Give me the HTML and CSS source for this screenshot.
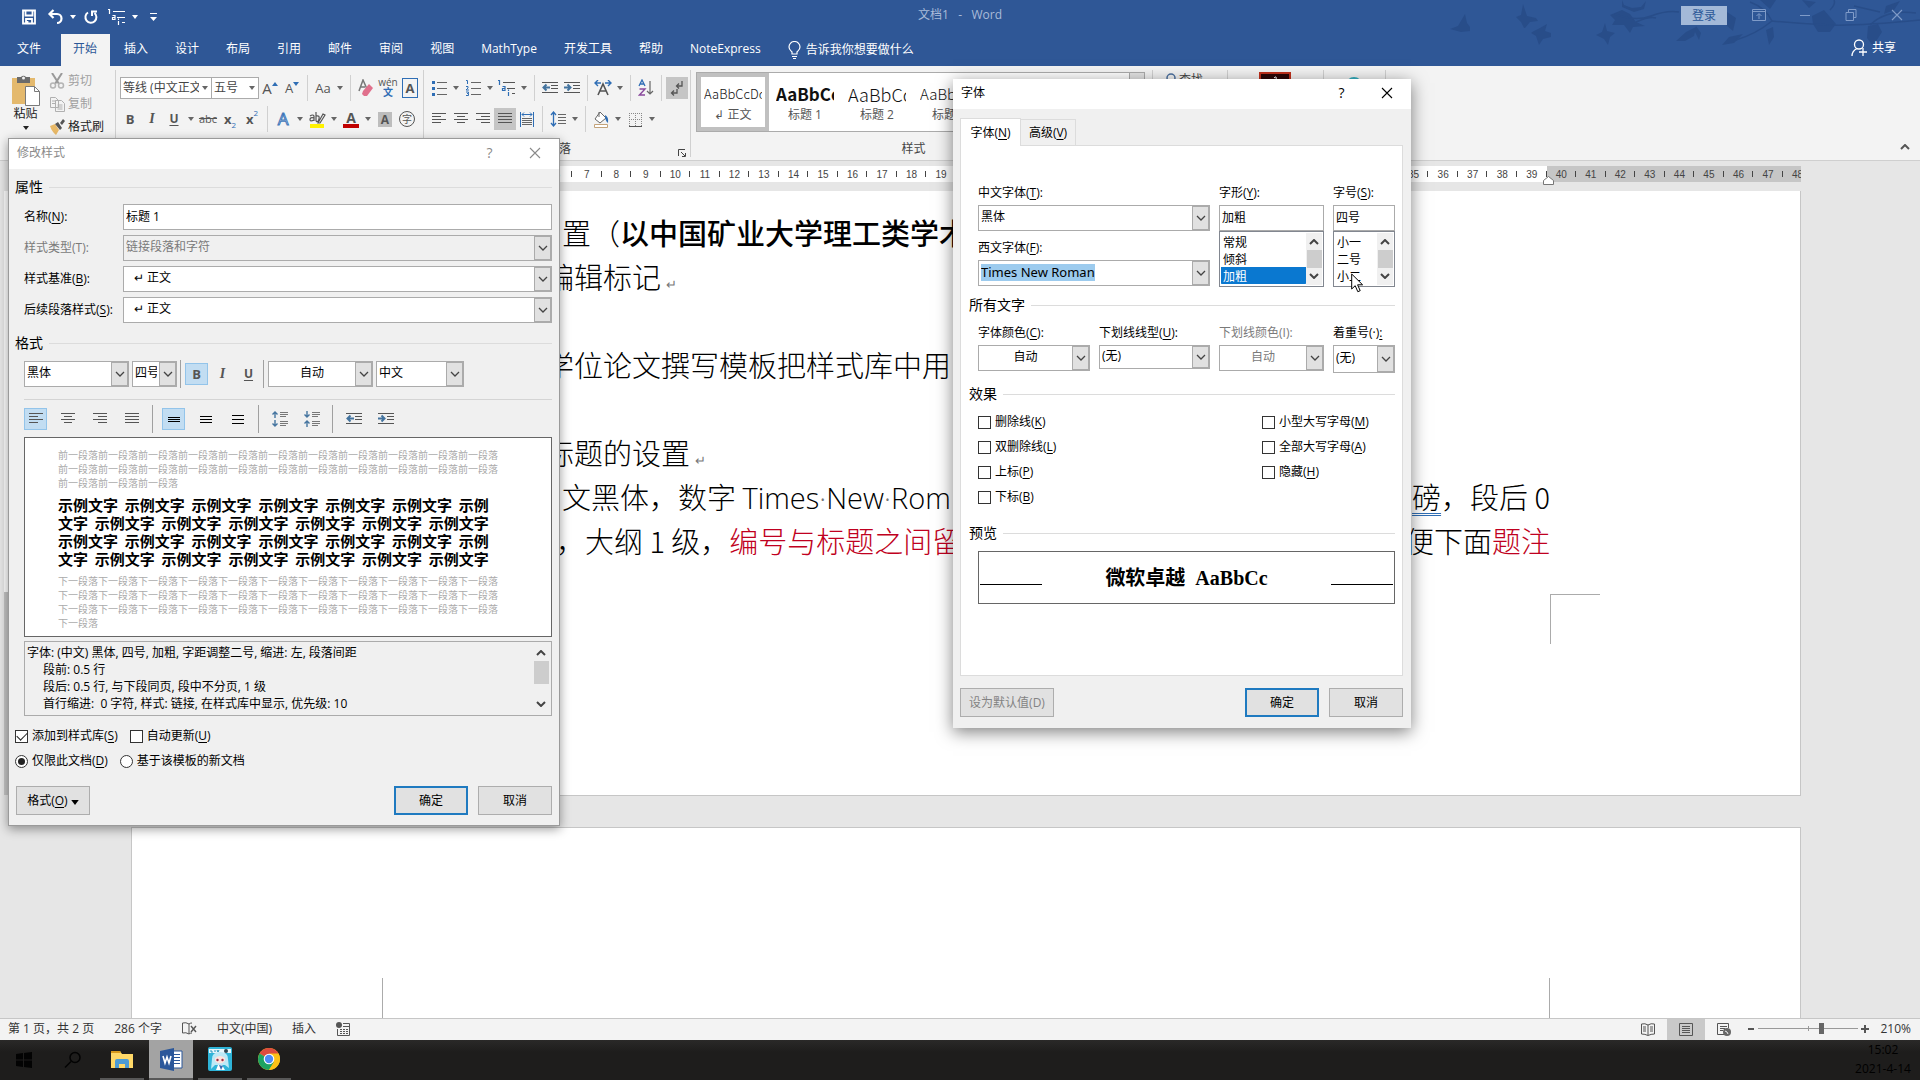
FILE: index.html
```html
<!DOCTYPE html>
<html lang="zh-CN">
<head>
  <meta charset="UTF-8" />
  <meta name="viewport" content="width=device-width, initial-scale=1" />
  <title>文档1 - Word</title>
  <link rel="stylesheet" href="styles.css">
</head>
<body>

  <!-- shared icon shapes -->
  <svg class="defs" aria-hidden="true">
    <symbol id="caret" viewBox="0 0 6 4"><path d="M0 0h6L3 4z" fill="currentColor"/></symbol>
    <symbol id="chev" viewBox="0 0 10 6"><path d="M1 1l4 4 4-4" fill="none" stroke="currentColor" stroke-width="1.3"/></symbol>
    <symbol id="chev-up" viewBox="0 0 10 6"><path d="M1 5l4-4 4 4" fill="none" stroke="currentColor" stroke-width="2"/></symbol>
    <symbol id="chev-down" viewBox="0 0 10 6"><path d="M1 1l4 4 4-4" fill="none" stroke="currentColor" stroke-width="2"/></symbol>
    <symbol id="close" viewBox="0 0 12 12"><path d="M1 1l10 10M11 1L1 11" fill="none" stroke="currentColor" stroke-width="1.1"/></symbol>
    <symbol id="al-left" viewBox="0 0 16 16"><path d="M1 2.5h14M1 5.5h9M1 8.5h14M1 11.5h9" stroke="currentColor" fill="none"/></symbol>
    <symbol id="al-center" viewBox="0 0 16 16"><path d="M1 2.5h14M4 5.5h8M1 8.5h14M4 11.5h8" stroke="currentColor" fill="none"/></symbol>
    <symbol id="al-right" viewBox="0 0 16 16"><path d="M1 2.5h14M6 5.5h9M1 8.5h14M6 11.5h9" stroke="currentColor" fill="none"/></symbol>
    <symbol id="al-just" viewBox="0 0 16 16"><path d="M1 2.5h14M1 5.5h14M1 8.5h14M1 11.5h14" stroke="currentColor" fill="none"/></symbol>
    <symbol id="multi" viewBox="0 0 18 16">
      <path d="M5 2.5h12M9 8.5h8M14 13.5h3" stroke="currentColor" fill="none"/>
      <path d="M0 .5h1.500V5M4.500 6.500h2.500v4H4.500v-2H7M10.500 9.500v1.500M10.500 12v4" class="accent" stroke-width="1.200" fill="none"/>
    </symbol>
    <symbol id="outdent" viewBox="0 0 16 16">
      <path d="M0 2.500h16M9 5.500h7M9 8.500h7M0 12.500h16" stroke="currentColor" fill="none"/>
      <path d="M8 7.500H2M4.500 4.500l-3 3 3 3" stroke="#44749f" stroke-width="2" fill="none"/>
    </symbol>
    <symbol id="indent" viewBox="0 0 16 16">
      <path d="M0 2.500h16M9 5.500h7M9 8.500h7M0 12.500h16" stroke="currentColor" fill="none"/>
      <path d="M0 7.500h6M3.500 4.500l3 3-3 3" stroke="#44749f" stroke-width="2" fill="none"/>
    </symbol>
    <symbol id="launcher" viewBox="0 0 8 8"><path d="M.5 7V.5H7M3 3l4 4M7.500 4v3.500H4" stroke="currentColor" fill="none"/></symbol>
  </svg>

  <div class="word">
    <header class="top">
      <svg class="birds" viewBox="0 0 470 66" aria-hidden="true">
        <g fill="#284d89">
          <path d="M15 14l2 9 3 4 0 4-9 1-11-3 8-3z"/>
          <path d="M73 4l4 12 9 2 2 3-8 1-5 6-1 0-3-6-5-5 5-2z"/>
          <path d="M97 24l-7 4-6 3-3 2 5 3 3 9 4-6 8-2 0-4-6-2z"/>
          <path d="M155 23l2 8 8 2-5 4-2 8-4-6-8-4 6-3z"/>
          <path d="M160 15l12-5 8 4 6 8 9 4-12 1-3 6-6-8-12 0 3-5z"/>
          <path d="M172 0l2 5 8 3 9-1 5-6-2 8-10 3-12-5z"/>
          <path d="M226 41l10-9 10-5-2 9-9 5zM249 40l-4-8 1-6 5 7zM272 45l7-8 14-3-9 9zM277 12l9 6-3 13-7-6zM316 30l3 15 5-8-1-10z"/>
          <path d="M362 16l12-6 12 14-6 8-12 0-5-8zM418 26l10-2 4 8-9 14-6-8zM436 6l14-5-6 9-10 4zM310 0l10 9 6-9zM352 0l7 8 7-6z"/>
        </g>
        <g fill="none" stroke="#284d89" stroke-width="1.500">
          <path d="M165 14q20 8 36 2t28-4M186 22q14-6 20-4"/>
          <path d="M286 40q20-6 36-19 30 3 58 4t90-5"/>
          <path d="M300 2q16 6 22 19M420 25q16-16 46-12M380 10q6-6 4-10M404 6l26 6"/>
        </g>
      </svg>
      <div class="titlebar">
        <div class="quick">
          <button class="qbtn" aria-label="保存"><svg width="16" height="16" viewBox="0 0 16 16"><path d="M2 1.500h12v13H2zM4.500 1.500v5h7v-5M5 14.500V10h6v4.500M6.500 12v2" fill="none" stroke="currentColor" stroke-width="1.800"/></svg></button>
          <button class="qbtn" aria-label="撤消"><svg width="16" height="16" viewBox="0 0 16 16"><path d="M2 5h8a4.500 4.500 0 0 1 0 9M6.500 1L2.500 5l4 4" fill="none" stroke="currentColor" stroke-width="2.200"/></svg></button>
          <svg class="caret" width="6" height="4"><use href="#caret"/></svg>
          <button class="qbtn" aria-label="重复"><svg width="16" height="16" viewBox="0 0 16 16"><path d="M5 3.500a5.500 5.500 0 1 0 6.500.5M9 7V2.500h5" fill="none" stroke="currentColor" stroke-width="2"/></svg></button>
          <button class="qbtn" aria-label="多级列表"><svg width="18" height="16"><use href="#multi"/></svg></button>
          <svg class="caret" width="6" height="4"><use href="#caret"/></svg>
          <button class="qbtn" aria-label="自定义快速访问工具栏"><svg width="7" height="8" viewBox="0 0 7 8"><path d="M0 .5h7" stroke="currentColor"/><path d="M0 4h7L3.500 8z" fill="currentColor"/></svg></button>
        </div>
        <div class="title">文档1 &nbsp;&nbsp;-&nbsp;&nbsp; Word</div>
        <div class="window-buttons">
          <button class="login">登录</button>
          <button aria-label="功能区显示选项"><svg width="14" height="12" viewBox="0 0 14 12"><path d="M.5.5h13v11H.5zM.5 2.500h13M7 10V5M4.500 7L7 4.500 9.500 7" fill="none" stroke="currentColor"/></svg></button>
          <button aria-label="最小化"><svg width="12" height="12" viewBox="0 0 12 12"><path d="M1 6.500h10" stroke="currentColor"/></svg></button>
          <button aria-label="还原"><svg width="12" height="12" viewBox="0 0 12 12"><path d="M1 3.500h7.500v8H1zM3.500 3V.5H11v8H9" fill="none" stroke="currentColor"/></svg></button>
          <button aria-label="关闭"><svg width="12" height="12"><use href="#close"/></svg></button>
        </div>
      </div>
      <nav class="tabs">
        <a class="file" href="#">文件</a>
        <a class="active" href="#">开始</a>
        <a href="#">插入</a>
        <a href="#">设计</a>
        <a href="#">布局</a>
        <a href="#">引用</a>
        <a href="#">邮件</a>
        <a href="#">审阅</a>
        <a href="#">视图</a>
        <a href="#">MathType</a>
        <a href="#">开发工具</a>
        <a href="#">帮助</a>
        <a href="#">NoteExpress</a>
        <a class="tell" href="#"><svg width="13" height="18" viewBox="0 0 13 18"><path d="M4 13v-2C2.500 9.500 1 8.500 1 6a5.500 5.500 0 0 1 11 0c0 2.500-1.500 3.500-3 5v2zM4 15.500h5M5 17.500h3" fill="none" stroke="currentColor" stroke-width="1.200"/></svg>告诉我你想要做什么</a>
        <a class="share" href="#"><svg width="16" height="18" viewBox="0 0 16 18"><circle cx="8" cy="5.500" r="4.500" fill="none" stroke="currentColor" stroke-width="1.300"/><path d="M1 17q0-5 5-7.500M12 9v8M8 13h8" fill="none" stroke="currentColor" stroke-width="1.300"/></svg>共享</a>
      </nav>
    </header>

    <div class="ribbon">
      <section class="group clipboard">
        <div class="clip-body">
          <button class="paste">
            <svg width="30" height="32" viewBox="0 0 30 32"><path d="M1 4h23v26H1z" fill="#e4b96d"/><path d="M6 3h4a3 3 0 0 1 5 0h4v6H6z" fill="#6b6b6b"/><circle cx="12.500" cy="4" r="1.500" fill="#f3f3f3"/><path d="M14.500 12.500h9l5 5v14h-14z" fill="#fff" stroke="#7a7a7a"/><path d="M23.500 12.500v5h5" fill="none" stroke="#7a7a7a"/></svg>
            粘贴
            <svg width="6" height="4"><use href="#caret"/></svg>
          </button>
          <div class="clip-list">
            <button class="dim"><svg width="16" height="16" viewBox="0 0 16 16"><path d="M3 0l7 11M13 0L6 11" stroke="#9a9a9a" stroke-width="2" fill="none"/><circle cx="4" cy="12.500" r="2.500" fill="none" stroke="#b5b5b5" stroke-width="1.500"/><circle cx="12" cy="12.500" r="2.500" fill="none" stroke="#b5b5b5" stroke-width="1.500"/></svg>剪切</button>
            <button class="dim"><svg width="16" height="16" viewBox="0 0 16 16"><path d="M1.500 1.500h5l3 3v7h-8zM3 5h4M3 7.500h4M6.500 4.500h6l3 3v8h-9zM8.500 9h5M8.500 11h5M8.500 13h5" fill="#f3f3f3" stroke="#b0b0b0"/></svg>复制</button>
            <button><svg width="16" height="16" viewBox="0 0 16 16"><path d="M1 7l5-2 4 6-3 5q-4-3-6-9z" fill="#e8b968"/><path d="M6 5l3-2 4 6-2 2zM11 4l3-4 2 2-3 4z" fill="#555"/></svg>格式刷</button>
          </div>
        </div>
      </section>

      <section class="group font-group">
        <div class="row">
          <label class="rcombo face"><select aria-label="字体"><option>等线 (中文正文)</option></select><svg class="caret" width="6" height="4"><use href="#caret"/></svg></label>
          <label class="rcombo size"><select aria-label="字号"><option>五号</option></select><svg class="caret" width="6" height="4"><use href="#caret"/></svg></label>
          <button class="tool" aria-label="增大字号"><span class="glyph">A</span><svg width="6" height="12" viewBox="0 0 6 12"><path d="M0 4l3-4 3 4z" fill="#2f6eb5"/></svg></button>
          <button class="tool" aria-label="减小字号"><span class="glyph small">A</span><svg width="6" height="12" viewBox="0 0 6 12"><path d="M0 0h6L3 4z" fill="#2f6eb5"/></svg></button>
          <i class="sep"></i>
          <button class="tool" aria-label="更改大小写"><span class="glyph small">Aa</span></button><svg class="caret" width="6" height="4"><use href="#caret"/></svg>
          <i class="sep"></i>
          <button class="tool" aria-label="清除格式"><svg width="16" height="18" viewBox="0 0 16 18"><path d="M1 12L5 1l4 9M2 8h5" stroke="#777" stroke-width="1.500" fill="none"/><path d="M5 12l6-7 4 4-6 8H6l-2-2z" fill="#e0708c"/></svg></button>
          <button class="tool pinyin" aria-label="拼音指南"><span>wén</span><b>文</b></button>
          <button class="tool" aria-label="字符边框"><span class="boxed">A</span></button>
        </div>
        <div class="row">
          <button class="tool"><b>B</b></button>
          <button class="tool"><em>I</em></button>
          <button class="tool"><u class="bold">U</u></button><svg class="caret" width="6" height="4"><use href="#caret"/></svg>
          <button class="tool"><s>abc</s></button>
          <button class="tool"><b>x</b><sub>2</sub></button>
          <button class="tool"><b>x</b><sup>2</sup></button>
          <i class="sep"></i>
          <button class="tool"><span class="outlined">A</span></button><svg class="caret" width="6" height="4"><use href="#caret"/></svg>
          <button class="tool" aria-label="突出显示"><svg width="17" height="17" viewBox="0 0 17 17"><path d="M1 13h14v4H1z" fill="#fff200"/><path d="M1 5q3-2 4 0v5M5 7Q1 6 1 8.500T5 9M7 1v9M7 5q4-1 3 3t-3 2M9 12l5-9 2 1-5 8z" fill="none" stroke="#555" stroke-width="1.200"/></svg></button><svg class="caret" width="6" height="4"><use href="#caret"/></svg>
          <button class="tool"><span class="font-color">A</span></button><svg class="caret" width="6" height="4"><use href="#caret"/></svg>
          <button class="tool"><span class="shaded">A</span></button>
          <button class="tool"><span class="circled">字</span></button>
        </div>
      </section>

      <section class="group para-group">
        <div class="row">
          <button class="tool" aria-label="项目符号"><svg width="16" height="16" viewBox="0 0 16 16"><path d="M6 2.500h10M6 8.500h10M6 14.500h10" stroke="#666"/><path d="M1 1h3v3H1zM1 7h3v3H1zM1 13h3v3H1z" fill="#2f6eb5"/></svg></button><svg class="caret" width="6" height="4"><use href="#caret"/></svg>
          <button class="tool" aria-label="编号"><svg width="16" height="16" viewBox="0 0 16 16"><path d="M6 2.500h10M6 8.500h10M6 14.500h10" stroke="#666"/><path d="M1 .5h1.500V4M1 6.500h2v1.500L1 10h3M1 12h2.500v1.500H2M3.500 13.500v2H1" stroke="#2f6eb5" fill="none"/></svg></button><svg class="caret" width="6" height="4"><use href="#caret"/></svg>
          <button class="tool" aria-label="多级列表"><svg width="18" height="16"><use href="#multi"/></svg></button><svg class="caret" width="6" height="4"><use href="#caret"/></svg>
          <i class="sep"></i>
          <button class="tool" aria-label="减少缩进量"><svg width="16" height="16"><use href="#outdent"/></svg></button>
          <button class="tool" aria-label="增加缩进量"><svg width="16" height="16"><use href="#indent"/></svg></button>
          <i class="sep"></i>
          <button class="tool" aria-label="中文版式"><svg width="18" height="16" viewBox="0 0 18 16"><path d="M4 15L9 4l5 11M6 11h6" stroke="#555" stroke-width="1.600" fill="none"/><path d="M7 3H1M4 0L1 3l3 3M11 3h6M14 0l3 3-3 3" stroke="#2f6eb5" stroke-width="1.400" fill="none"/></svg></button><svg class="caret" width="6" height="4"><use href="#caret"/></svg>
          <i class="sep"></i>
          <button class="tool" aria-label="排序"><svg width="16" height="18" viewBox="0 0 16 18"><path d="M1 7l3-6 3 6M2 5h4" stroke="#2f6eb5" stroke-width="1.300" fill="none"/><path d="M1.500 10H7l-5.500 6H7" stroke="#8a4a9d" stroke-width="1.400" fill="none"/><path d="M12 2v13M9 12l3 3 3-3" stroke="#666" stroke-width="1.200" fill="none"/></svg></button>
          <i class="sep"></i>
          <button class="tool on" aria-label="显示编辑标记"><svg width="16" height="16" viewBox="0 0 16 16"><path d="M13 1v5H8M10 3.500L7.500 6 10 8.500M8 9v4H3M5 10.500L2.500 13 5 15.500" stroke="#555" stroke-width="1.300" fill="none"/></svg></button>
        </div>
        <div class="row">
          <button class="tool" aria-label="左对齐"><svg width="16" height="16"><use href="#al-left"/></svg></button>
          <button class="tool" aria-label="居中"><svg width="16" height="16"><use href="#al-center"/></svg></button>
          <button class="tool" aria-label="右对齐"><svg width="16" height="16"><use href="#al-right"/></svg></button>
          <button class="tool on" aria-label="两端对齐"><svg width="16" height="16"><use href="#al-just"/></svg></button>
          <button class="tool" aria-label="分散对齐"><svg width="16" height="16" viewBox="0 0 16 16"><path d="M3 7.500h10M3 9.500h10M3 11.500h10M3 13.500h10" stroke="#666"/><path d="M1.500 1v15M14.500 1v15M3 3.500h10M5 1.500l-2 2 2 2M11 1.500l2 2-2 2" stroke="#2f6eb5" fill="none"/></svg></button>
          <i class="sep"></i>
          <button class="tool" aria-label="行距"><svg width="16" height="16" viewBox="0 0 16 16"><path d="M8 3.500h8M8 6.500h8M8 9.500h8M8 12.500h8" stroke="#666"/><path d="M3.500 1v14M1 4l2.500-3L6 4M1 12l2.500 3L6 12" stroke="#2f6eb5" stroke-width="1.300" fill="none"/></svg></button><svg class="caret" width="6" height="4"><use href="#caret"/></svg>
          <i class="sep"></i>
          <button class="tool" aria-label="底纹"><svg width="17" height="17" viewBox="0 0 17 17"><path d="M7 1L2 8l5 4 6-5zM6 1v5" stroke="#666" fill="#fff"/><path d="M12 4q4 2 3 8-3-2-3-8z" fill="#2f6eb5"/><path d="M1.500 13.500h13v3h-13z" fill="#fff" stroke="#c3a37a"/></svg></button><svg class="caret" width="6" height="4"><use href="#caret"/></svg>
          <button class="tool" aria-label="边框"><svg width="15" height="15" viewBox="0 0 15 15"><path d="M1 1.500h13M1 7.500h13M1.500 1v13M7.500 1v13M13.500 1v13" stroke="#888" stroke-dasharray="1 1"/><path d="M1 14.500h13" stroke="#555"/></svg></button><svg class="caret" width="6" height="4"><use href="#caret"/></svg>
        </div>
        <div class="group-name">段落</div>
        <svg class="launcher" width="8" height="8"><use href="#launcher"/></svg>
      </section>

      <section class="group style-group">
        <div class="gallery">
          <button class="style-item current"><span class="s-normal">AaBbCcDd</span><span>↲ 正文</span></button>
          <button class="style-item"><span class="s-h1">AaBbCc</span><span>标题 1</span></button>
          <button class="style-item"><span class="s-h2">AaBbCc</span><span>标题 2</span></button>
          <button class="style-item"><span class="s-h3">AaBbCcD</span><span>标题 3</span></button>
          <div class="gallery-more"></div>
        </div>
        <div class="group-name">样式</div>
      </section>

      <section class="group edit-group">
        <button class="find"><svg width="12" height="14" viewBox="0 0 12 14"><circle cx="7" cy="5" r="4" fill="none" stroke="#4a6f9f" stroke-width="1.500"/><path d="M4 8l-4 5" stroke="#4a6f9f" stroke-width="2"/></svg>查找</button>
      </section>
      <section class="group addin-a"><svg width="32" height="32" viewBox="0 0 32 32"><path d="M1 1h30v30H1z" fill="#2a0505" stroke="#c0301c" stroke-width="2"/><path d="M15 6q3-3 2 2" stroke="#fff" fill="none"/></svg></section>
      <section class="group addin-b"><svg width="16" height="16" viewBox="0 0 16 16"><circle cx="8" cy="8" r="8" fill="#35b0c0"/></svg></section>
      <button class="collapse" aria-label="折叠功能区"><svg width="10" height="6"><use href="#chev-up"/></svg></button>
    </div>

    <main class="workspace">
      <div class="ruler"><div class="ruler-cells" id="rulerCells"></div><svg class="indent-mark" width="11" height="9" viewBox="0 0 11 9"><path d="M.5 8.500v-4l5-4 5 4v4z" fill="#fff" stroke="#777"/></svg></div>
      <div class="vruler"></div>
      <article class="page first">
        <p class="from-edge"><span>置（<b>以中国矿业大学理工类学术</b></span></p>
        <p><span>编辑标记<i class="mark">↵</i></span></p>
        <p></p>
        <p><span>学位论文撰写模板把样式库中用</span></p>
        <p></p>
        <p><span>标题的设置<i class="mark">↵</i></span></p>
        <p class="from-edge"><span>文黑体，数字 <span class="latin">Times<i class="dot">·</i>New<i class="dot">·</i>Rom</span></span><span><span class="grammar">磅</span>，段后 0</span></p>
        <p class="from-comma"><span>，大纲 1 级，<span class="red">编号与标题之间留</span></span><span>便下面<span class="red">题注</span></span></p>
        <div class="corner"></div>
      </article>
      <article class="page second"></article>
    </main>

    <footer class="status">
      <span>第 1 页，共 2 页</span>
      <span>286 个字</span>
      <svg width="15" height="13" viewBox="0 0 15 13"><path d="M7 2Q4 0 .5 1v10Q4 10 7 12zM7 2q1-1 3-1M7 12q1-1 3-1" fill="none" stroke="#555"/><path d="M9 4l5 6M14 4l-5 6" stroke="#555" stroke-width="1.400"/></svg>
      <span>中文(中国)</span>
      <span>插入</span>
      <svg width="14" height="14" viewBox="0 0 14 14"><circle cx="3" cy="3" r="3" fill="#555"/><path d="M7 1.500h6.500v12H1.500V7M7 4.500h6" fill="none" stroke="#555"/><path d="M4 7.500h8M4 9.500h8M4 11.500h8" stroke="#555" stroke-dasharray="2 1"/></svg>
      <div class="views">
        <button aria-label="阅读视图"><svg width="14" height="13" viewBox="0 0 14 13"><path d="M7 2Q4 0 .5 1v10Q4 11 7 12.500 10 11 13.500 11V1Q10 0 7 2v10M2 4h3M2 6h3M2 8h3M9 4h3M9 6h3M9 8h3" fill="none" stroke="#555"/></svg></button>
        <button class="on" aria-label="页面视图"><svg width="14" height="13" viewBox="0 0 14 13"><path d="M.5.500h13v12H.5zM3 3.500h8M3 5.500h8M3 7.500h8M3 9.500h8" fill="none" stroke="#555"/></svg></button>
        <button aria-label="Web 版式视图"><svg width="14" height="13" viewBox="0 0 14 13"><path d="M7 11.500H.5V.5h11V5M3 3.500h7M3 5.500h5M3 7.500h3" fill="none" stroke="#555"/><circle cx="10" cy="9" r="4" fill="#666"/><path d="M8 8l2 1 1 2" stroke="#eee" fill="none"/></svg></button>
      </div>
      <div class="zoom">
        <button aria-label="缩小"><svg width="8" height="8" viewBox="0 0 8 8"><path d="M1 4h6" stroke="#555" stroke-width="2"/></svg></button>
        <input type="range" min="0" max="100" value="64" aria-label="显示比例">
        <button aria-label="放大"><svg width="8" height="8" viewBox="0 0 8 8"><path d="M0 4h8M4 0v8" stroke="#555" stroke-width="2"/></svg></button>
        <span>210%</span>
      </div>
    </footer>

    <footer class="taskbar">
      <button aria-label="开始"><svg width="16" height="16" viewBox="0 0 16 16"><path d="M0 2l7-1v6.500H0zM8 1l8-1v7.500H8zM0 8.500h7V15l-7-1zM8 8.500h8V16l-8-1z" fill="#030303"/></svg></button>
      <button aria-label="搜索"><svg width="18" height="18" viewBox="0 0 18 18"><circle cx="11" cy="6.500" r="5" fill="none" stroke="#030303" stroke-width="1.500"/><path d="M7 10.500l-6 6" stroke="#030303" stroke-width="1.500"/></svg></button>
      <button class="open" aria-label="文件资源管理器"><svg width="22" height="19" viewBox="0 0 22 19"><path d="M0 1h9l2 3h11v14H0z" fill="#ffd867"/><path d="M0 1h9l1 2H0z" fill="#d89a1c"/><path d="M4 18v-7q0-2 2-2h10q2 0 2 2v7h-4v-4H8v4z" fill="#4c9bd4"/></svg></button>
      <button class="open current" aria-label="Word"><svg width="23" height="23" viewBox="0 0 23 23"><path d="M12 3h10v17H12z" fill="#fff" stroke="#2b579a"/><path d="M14 6.500h6M14 9.500h6M14 12.500h6M14 15.500h6" stroke="#2b579a"/><path d="M0 3l14-3v23L0 20z" fill="#2b579a"/><path d="M3 8l2 7 2-6 2 6 2-7" fill="none" stroke="#fff" stroke-width="1.600"/></svg></button>
      <button class="open" aria-label="看板娘"><svg width="24" height="24" viewBox="0 0 24 24"><rect width="24" height="24" rx="2" fill="#2fb4d8"/><path d="M1 2h22v4H1z" fill="#e8f6fb"/><path d="M3 3v2h2M7 3v2M9 3l1 2 1-2" stroke="#2196bd" fill="none"/><path d="M4 12q0-7 8-7t8 7l1 9-4-3H7l-4 4z" fill="#bde9f6"/><path d="M7 11q5-4 10 0v3q-5 5-10 0z" fill="#fbe4de"/><circle cx="9.500" cy="13" r="1.200" fill="#a02c44"/><circle cx="14.500" cy="13" r="1.200" fill="#a02c44"/><path d="M8 23l2-5h4l3 5z" fill="#fff"/><path d="M11 18l2 5 2-4z" fill="#3a6cb4"/><circle cx="18" cy="4" r="2" fill="#2c4450"/></svg></button>
      <button class="open" aria-label="Chrome"><svg width="22" height="22" viewBox="0 0 22 22"><circle cx="11" cy="11" r="11" fill="#fbc116"/><path d="M11 11L1.500 5.500A11 11 0 0 1 20.500 5.500z" fill="#dd4b3e"/><path d="M11 11L1.500 5.500A11 11 0 0 0 11 22l5-8z" fill="#1ea362"/><path d="M11 5.500h9.500A11 11 0 0 1 11 22l5-8z" fill="#fbc116"/><circle cx="11" cy="11" r="5.300" fill="#fff"/><circle cx="11" cy="11" r="4.200" fill="#4c8bf5"/></svg></button>
      <div class="clock">15:02<br>2021-4-14</div>
    </footer>
  </div>

  <!-- modify style -->
  <section class="dialog style-dialog" role="dialog" aria-label="修改样式">
    <div class="dlg-title"><span>修改样式</span><button aria-label="帮助">?</button><button aria-label="关闭"><svg width="12" height="12"><use href="#close"/></svg></button></div>
    <div class="style-body">
      <h3>属性</h3>
      <div class="fields">
        <label for="name">名称(<u>N</u>):</label>
        <input class="text" id="name" type="text" value="标题 1">
        <label class="off" for="kind">样式类型(T):</label>
        <div class="combo off"><select id="kind" disabled><option>链接段落和字符</option></select><span class="arrow"><svg width="10" height="6"><use href="#chev"/></svg></span></div>
        <label for="base">样式基准(<u>B</u>):</label>
        <div class="combo marked"><select id="base"><option>↵ 正文</option></select><span class="arrow"><svg width="10" height="6"><use href="#chev"/></svg></span></div>
        <label for="next">后续段落样式(<u>S</u>):</label>
        <div class="combo marked"><select id="next"><option>↵ 正文</option></select><span class="arrow"><svg width="10" height="6"><use href="#chev"/></svg></span></div>
      </div>
      <h3>格式</h3>
      <div class="format-row">
        <div class="combo w-face"><select aria-label="字体"><option>黑体</option></select><span class="arrow"><svg width="10" height="6"><use href="#chev"/></svg></span></div>
        <div class="combo w-size"><select aria-label="字号"><option>四号</option></select><span class="arrow"><svg width="10" height="6"><use href="#chev"/></svg></span></div>
        <i class="bar"></i>
        <button class="tog on"><b>B</b></button>
        <button class="tog"><em>I</em></button>
        <button class="tog"><u class="bold">U</u></button>
        <i class="bar"></i>
        <div class="combo w-face centered"><select aria-label="颜色"><option>自动</option></select><span class="arrow"><svg width="10" height="6"><use href="#chev"/></svg></span></div>
        <div class="combo w-lang"><select aria-label="语言"><option>中文</option></select><span class="arrow"><svg width="10" height="6"><use href="#chev"/></svg></span></div>
      </div>
      <div class="align-row">
        <button class="tog on" aria-label="左对齐"><svg width="16" height="16"><use href="#al-left"/></svg></button>
        <button class="tog" aria-label="居中"><svg width="16" height="16"><use href="#al-center"/></svg></button>
        <button class="tog" aria-label="右对齐"><svg width="16" height="16"><use href="#al-right"/></svg></button>
        <button class="tog" aria-label="两端对齐"><svg width="16" height="16"><use href="#al-just"/></svg></button>
        <i class="bar"></i>
        <button class="tog on" aria-label="单倍行距"><svg width="12" height="12" viewBox="0 0 12 12"><path d="M0 4.500h12M0 6.500h12M0 8.500h12" stroke="#000"/></svg></button>
        <button class="tog" aria-label="1.5 倍行距"><svg width="12" height="12" viewBox="0 0 12 12"><path d="M0 3.500h12M0 6.500h12M0 9.500h12" stroke="#000"/></svg></button>
        <button class="tog" aria-label="2 倍行距"><svg width="12" height="12" viewBox="0 0 12 12"><path d="M0 2.500h12M0 6.500h12M0 10.500h12" stroke="#000"/></svg></button>
        <i class="bar"></i>
        <button class="tog" aria-label="增加段落间距"><svg width="16" height="18" viewBox="0 0 16 18"><path d="M8 2.500h8M8 4.500h8M8 6.500h6M8 11.500h8M8 13.500h8M8 15.500h6" stroke="#777"/><path d="M3 8V2M.5 4.500L3 2l2.500 2.500M3 10v6M.5 13.500L3 16l2.500-2.500" stroke="#44749f" stroke-width="1.400" fill="none"/></svg></button>
        <button class="tog" aria-label="减少段落间距"><svg width="16" height="18" viewBox="0 0 16 18"><path d="M8 2.500h8M8 4.500h8M8 6.500h6M8 11.500h8M8 13.500h8M8 15.500h6" stroke="#777"/><path d="M3 1v6M.5 4.500L3 7l2.500-2.500M3 17v-6M.5 13.500L3 11l2.500 2.500" stroke="#44749f" stroke-width="1.400" fill="none"/></svg></button>
        <i class="bar"></i>
        <button class="tog" aria-label="减少缩进量"><svg width="16" height="16"><use href="#outdent"/></svg></button>
        <button class="tog" aria-label="增加缩进量"><svg width="16" height="16"><use href="#indent"/></svg></button>
      </div>
      <div class="sample">
        <p>前一段落前一段落前一段落前一段落前一段落前一段落前一段落前一段落前一段落前一段落前一段落<br>前一段落前一段落前一段落前一段落前一段落前一段落前一段落前一段落前一段落前一段落前一段落<br>前一段落前一段落前一段落</p>
        <p class="main">示例文字&nbsp; 示例文字&nbsp; 示例文字&nbsp; 示例文字&nbsp; 示例文字&nbsp; 示例文字&nbsp; 示例<br>文字&nbsp; 示例文字&nbsp; 示例文字&nbsp; 示例文字&nbsp; 示例文字&nbsp; 示例文字&nbsp; 示例文字<br>示例文字&nbsp; 示例文字&nbsp; 示例文字&nbsp; 示例文字&nbsp; 示例文字&nbsp; 示例文字&nbsp; 示例<br>文字&nbsp; 示例文字&nbsp; 示例文字&nbsp; 示例文字&nbsp; 示例文字&nbsp; 示例文字&nbsp; 示例文字</p>
        <p>下一段落下一段落下一段落下一段落下一段落下一段落下一段落下一段落下一段落下一段落下一段落<br>下一段落下一段落下一段落下一段落下一段落下一段落下一段落下一段落下一段落下一段落下一段落<br>下一段落下一段落下一段落下一段落下一段落下一段落下一段落下一段落下一段落下一段落下一段落<br>下一段落</p>
      </div>
      <div class="summary">
        <p>字体: (中文) 黑体, 四号, 加粗, 字距调整二号, 缩进: 左, 段落间距<br><span>段前: 0.5 行</span><br><span>段后: 0.5 行, 与下段同页, 段中不分页, 1 级</span><br><span>首行缩进:&nbsp; 0 字符, 样式: 链接, 在样式库中显示, 优先级: 10</span></p>
        <div class="scroll"><svg width="10" height="6"><use href="#chev-up"/></svg><i></i><svg width="10" height="6"><use href="#chev-down"/></svg></div>
      </div>
      <div class="checks">
        <label><input type="checkbox" checked><span>添加到样式库(<u>S</u>)</span></label>
        <label><input type="checkbox"><span>自动更新(<u>U</u>)</span></label>
      </div>
      <div class="checks">
        <label><input type="radio" name="scope" checked><span>仅限此文档(<u>D</u>)</span></label>
        <label><input type="radio" name="scope"><span>基于该模板的新文档</span></label>
      </div>
      <div class="dlg-buttons">
        <button class="btn left">格式(<u>O</u>) <svg width="8" height="5"><use href="#caret"/></svg></button>
        <button class="btn default">确定</button>
        <button class="btn">取消</button>
      </div>
    </div>
  </section>

  <!-- font -->
  <section class="dialog font-dialog" role="dialog" aria-label="字体">
    <div class="dlg-title"><span>字体</span><button aria-label="帮助">?</button><button aria-label="关闭"><svg width="12" height="12"><use href="#close"/></svg></button></div>
    <div class="font-body">
      <div class="dlg-tabs"><button class="active">字体(<u>N</u>)</button><button>高级(<u>V</u>)</button></div>
      <div class="panel">
        <div class="font-top">
          <div class="faces">
            <label for="cn">中文字体(<u>T</u>):</label>
            <div class="combo"><select id="cn"><option>黑体</option></select><span class="arrow"><svg width="10" height="6"><use href="#chev"/></svg></span></div>
            <label for="west">西文字体(<u>F</u>):</label>
            <div class="combo"><input id="west" type="text" value="Times New Roman"><span class="arrow"><svg width="10" height="6"><use href="#chev"/></svg></span></div>
          </div>
          <div>
            <label for="weight">字形(<u>Y</u>):</label>
            <input class="text" id="weight" type="text" value="加粗">
            <div class="list"><select size="3" aria-label="字形列表"><option>常规</option><option>倾斜</option><option selected>加粗</option></select><div class="scroll"><svg width="10" height="6"><use href="#chev-up"/></svg><i></i><svg width="10" height="6"><use href="#chev-down"/></svg></div></div>
          </div>
          <div>
            <label for="pt">字号(<u>S</u>):</label>
            <input class="text" id="pt" type="text" value="四号">
            <div class="list"><select size="3" aria-label="字号列表"><option>小一</option><option>二号</option><option>小二</option></select><div class="scroll"><svg width="10" height="6"><use href="#chev-up"/></svg><i></i><svg width="10" height="6"><use href="#chev-down"/></svg></div></div>
          </div>
        </div>
        <h3>所有文字</h3>
        <div class="font-all">
          <div><label for="color">字体颜色(<u>C</u>):</label><div class="combo centered"><select id="color"><option>自动</option></select><span class="arrow"><svg width="10" height="6"><use href="#chev"/></svg></span></div></div>
          <div><label for="line">下划线线型(<u>U</u>):</label><div class="combo short"><select id="line"><option>(无)</option></select><span class="arrow"><svg width="10" height="6"><use href="#chev"/></svg></span></div></div>
          <div><label class="off" for="lcolor">下划线颜色(I):</label><div class="combo centered off-text"><select id="lcolor" disabled><option>自动</option></select><span class="arrow"><svg width="10" height="6"><use href="#chev"/></svg></span></div></div>
          <div><label for="dot">着重号(·)<u>:</u></label><div class="combo tall"><select id="dot"><option>(无)</option></select><span class="arrow"><svg width="10" height="6"><use href="#chev"/></svg></span></div></div>
        </div>
        <h3>效果</h3>
        <div class="effects">
          <label><input type="checkbox"><span>删除线(<u>K</u>)</span></label>
          <label><input type="checkbox"><span>小型大写字母(<u>M</u>)</span></label>
          <label><input type="checkbox"><span>双删除线(<u>L</u>)</span></label>
          <label><input type="checkbox"><span>全部大写字母(<u>A</u>)</span></label>
          <label><input type="checkbox"><span>上标(<u>P</u>)</span></label>
          <label><input type="checkbox"><span>隐藏(<u>H</u>)</span></label>
          <label><input type="checkbox"><span>下标(<u>B</u>)</span></label>
        </div>
        <h3>预览</h3>
        <div class="font-preview"><i></i><span>微软卓越&nbsp; AaBbCc</span><i></i></div>
      </div>
      <div class="dlg-buttons">
        <button class="btn left" disabled>设为默认值(D)</button>
        <button class="btn default">确定</button>
        <button class="btn">取消</button>
      </div>
    </div>
    <svg class="pointer" width="13" height="20" viewBox="0 0 13 20"><path d="M.7 1v15l3.500-3.300 2.600 6 2.400-1-2.600-5.900h5z" fill="#fff" stroke="#000"/></svg>
  </section>

  <script>
    const cells = document.getElementById('rulerCells');
    for (let n = -8; n <= 48; n++) {
      const cell = document.createElement('span');
      if (n < 0 || n > 39) cell.className = 'outside';
      cell.textContent = n === 0 ? '' : Math.abs(n);
      cells.appendChild(cell);
    }

    const west = document.getElementById('west');
    west.focus();
    west.select();
  </script>

</body>
</html>
```

FILE: styles.css
```css
* {
  box-sizing: border-box;
}

body {
  margin: 0;
  font: 12px/16px "Open Sans", "Noto Sans CJK SC", sans-serif;
  color: #222;
  overflow: hidden;
}

button, input, select {
  font: inherit;
  color: inherit;
  margin: 0;
}

button {
  border: none;
  background: none;
  padding: 0;
}

a {
  color: inherit;
  text-decoration: none;
}

p, h3 {
  margin: 0;
  font-weight: normal;
}

u {
  text-underline-offset: 2px;
}

.defs {
  position: absolute;
  width: 0;
  height: 0;
}

.word {
  --accent: #2f6eb5;
  display: flex;
  flex-direction: column;
  height: 100vh;
}

/* title bar and tabs */
.top {
  position: relative;
  background: #2f5796;
  color: #fff;
}

.birds {
  position: absolute;
  right: 0;
  top: 0;
  width: 470px;
  height: 66px;
}

.titlebar {
  position: relative;
  display: grid;
  grid-template-columns: 1fr auto 1fr;
  height: 34px;
}

.quick {
  --accent: #fff;
  display: flex;
  align-items: center;
  gap: 2px;
  padding-left: 17px;
}

.qbtn {
  display: flex;
  justify-content: center;
  width: 24px;
}

.accent {
  stroke: var(--accent);
}

.title {
  padding-top: 7px;
  color: #a9bbd9;
}

.window-buttons {
  display: flex;
  justify-content: flex-end;
  height: 30px;
  color: #7f9bc8;
}

.window-buttons button {
  display: flex;
  align-items: center;
  justify-content: center;
  width: 46px;
}

.window-buttons .login {
  height: 19px;
  margin: 6px 9px 0 0;
  background: #a3b9d8;
  color: #2b5797;
}

.tabs {
  position: relative;
  display: flex;
  gap: 2px;
  height: 32px;
  line-height: 30px;
}

.tabs a {
  padding: 0 13px 0 12px;
}

.tabs .file {
  padding: 0 18px 0 17px;
}

.tabs .active {
  background: #f3f3f3;
  color: #2b5797;
}

.tabs .tell,
.tabs .share {
  display: flex;
  align-items: center;
  gap: 5px;
}

.tabs .share {
  margin-left: auto;
  padding-right: 24px;
  padding-bottom: 4px;
}

/* ribbon */
.ribbon {
  display: flex;
  height: 95px;
  background: #f3f3f3;
  border-bottom: 1px solid #cfcfcf;
  color: #444;
}

.group {
  position: relative;
  display: flex;
  flex-direction: column;
  margin: 4px 0 3px;
  border-right: 1px solid #d0d0d0;
}

.group-name {
  margin-top: auto;
  text-align: center;
}

.clipboard {
  width: 116px;
}

.clip-body {
  display: flex;
  gap: 8px;
  padding: 0 0 0 10px;
}

.paste {
  display: flex;
  flex-direction: column;
  align-items: center;
  width: 31px;
  padding-top: 4px;
  color: #222;
}

.paste svg:last-child {
  margin-top: 4px;
}

.clip-list {
  display: flex;
  flex-direction: column;
  gap: 7px;
  padding-top: 3px;
}

.clip-list button {
  display: flex;
  gap: 3px;
  color: #222;
}

.clip-list .dim {
  color: #a0a0a0;
}

.font-group {
  width: 308px;
  padding: 7px 0 0 4px;
}

.para-group {
  width: 267px;
  padding: 7px 0 0 4px;
}

.row {
  display: flex;
  align-items: center;
  height: 22px;
  margin-bottom: 9px;
}

.font-group .row + .row {
  margin-left: -1px;
}

.tool {
  display: flex;
  align-items: center;
  justify-content: center;
  flex: none;
  width: 22px;
  height: 22px;
  color: #555;
}

.tool.on {
  background: #c5c5c5;
}

.caret {
  flex: none;
  color: #666;
  margin: 0 3px;
}

.quick .caret {
  margin: 0 1px;
  color: #fff;
}

.sep {
  flex: none;
  width: 1px;
  height: 26px;
  margin: 0 4px;
  background: #d0d0d0;
}

.rcombo {
  display: flex;
  align-items: center;
  height: 22px;
  border: 1px solid #ababab;
  background: #fff;
}

.rcombo.face {
  width: 92px;
}

.rcombo.size {
  width: 47px;
  border-left: none;
}

.rcombo select {
  flex: 1;
  min-width: 0;
  border: none;
  background: none;
  appearance: none;
  padding: 0 0 0 2px;
  color: #444;
  text-overflow: clip;
}

.glyph {
  font-size: 15px;
}

.glyph.small {
  font-size: 13px;
}

.pinyin {
  flex-direction: column;
  font-size: 10px;
  line-height: 9px;
}

.tool.pinyin b {
  font-size: 10px;
  line-height: 11px;
  color: #2f6eb5;
}

.boxed {
  width: 16px;
  border: 1px solid #2f6eb5;
  font-weight: bold;
  font-size: 13px;
  line-height: 18px;
}

.tool b, .tog b {
  font-weight: 700;
  font-size: 13px;
}

.bold {
  font-weight: 700;
}

.tool em, .tog em {
  font: italic bold 14px "Liberation Serif", serif;
}

.tool s {
  font-size: 11px;
}

.tool sub, .tool sup {
  font-size: 8px;
  line-height: 10px;
  color: #2f6eb5;
}

.tool sub {
  align-self: flex-end;
}

.tool sup {
  align-self: flex-start;
}

.outlined {
  font-size: 17px;
  color: #fff;
  -webkit-text-stroke: 1px #3f78ba;
}

.font-color {
  width: 16px;
  height: 17px;
  border-bottom: 4px solid #c00000;
  font-weight: bold;
  font-size: 14px;
  line-height: 14px;
}

.shaded {
  width: 14px;
  background: #bdbdbd;
  font-weight: bold;
  line-height: 15px;
}

.circled {
  width: 16px;
  height: 16px;
  border: 1px solid #555;
  border-radius: 50%;
  font-size: 10px;
  line-height: 14px;
}

.launcher {
  position: absolute;
  right: 4px;
  bottom: 0;
}

.style-group {
  width: 462px;
  padding: 2px 7px 0 5px;
}

.style-group .group-name {
  padding-right: 14px;
}

.gallery {
  display: flex;
  height: 60px;
  border: 1px solid #ababab;
  background: #fff;
}

.style-item {
  display: flex;
  flex-direction: column;
  align-items: center;
  justify-content: center;
  flex: none;
  width: 72px;
  padding: 0 7px;
  color: #555;
}

.style-item.current {
  border: 4px solid #c0c0c0;
  padding: 0 3px;
}

.style-item span {
  display: flex;
  align-items: center;
}

.style-item span:first-child {
  width: 100%;
  height: 26px;
  overflow: hidden;
  font-family: "Noto Sans CJK SC", sans-serif;
  font-weight: 300;
  color: #111;
}

.s-normal { font-size: 13px; }
.style-item .s-h1:first-child { font-size: 17px; font-weight: 700; }
.s-h2 { font-size: 18px; }
.s-h3 { font-size: 15px; }

.gallery-more {
  margin-left: auto;
  width: 15px;
  background: #e4e4e4;
  border-left: 1px solid #ababab;
}

.edit-group {
  width: 75px;
  padding: 2px 0 0 11px;
}

.find {
  display: flex;
  align-items: center;
  gap: 3px;
}

.addin-a {
  width: 96px;
  padding: 2px 0 0 31px;
}

.addin-b {
  width: 62px;
  padding: 7px 0 0 22px;
}

.collapse {
  margin: auto 10px 6px auto;
  color: #555;
}

/* document */
.workspace {
  position: relative;
  display: flex;
  flex-direction: column;
  flex: 1;
  min-height: 0;
  overflow: hidden;
  padding: 5px 119px 0 131px;
  background: #e6e6e6;
}

.ruler {
  position: relative;
  flex: none;
  height: 16px;
  margin-bottom: 9px;
}

.ruler-cells {
  display: flex;
  height: 16px;
  overflow: hidden;
  background: #fff;
}

.ruler-cells span {
  flex: 1 0 0;
  min-width: 0;
  font: 10px/18px "Liberation Sans", sans-serif;
  text-align: center;
  color: #444;
  background: linear-gradient(#444, #444) right center / 1px 6px no-repeat;
}

/* the first and last units run past the sheet */
.ruler-cells span:first-child {
  margin-left: -2px;
}

.ruler-cells span:last-child {
  margin-right: -11px;
}

.ruler-cells .outside {
  background-color: #c6c6c6;
}

.indent-mark {
  position: absolute;
  right: 247px;
  top: 10px;
}

.vruler {
  position: absolute;
  left: 4px;
  top: 30px;
  width: 16px;
  height: 604px;
  background: linear-gradient(#fff 401px, #c6c6c6 401px);
}

.page {
  background: #fff;
  border: 1px solid #c6c6c6;
  border-top: none;
}

.first {
  flex: none;
  padding: 19px 250px 151px 413px;
}

.first p {
  display: flex;
  justify-content: space-between;
  height: 44px;
  font: 300 29px/44px "Noto Sans CJK SC", sans-serif;
  color: #000;
  white-space: nowrap;
}

.first b {
  font-weight: 500;
}

.first .from-edge {
  padding-left: 17px;
}

.first .from-comma {
  padding-left: 11px;
}

.latin {
  font-family: "Open Sans", sans-serif;
}

.mark, .dot {
  font-style: normal;
  color: #777;
}

.mark {
  font-size: 13px;
  margin-left: 5px;
}

.red {
  color: #c00020;
}

.grammar {
  text-decoration: underline double #2f6eb5 1px;
  text-underline-offset: 4px;
}

.corner {
  width: 50px;
  height: 50px;
  margin: 32px -50px 0 auto;
  border-left: 1px solid #ababab;
  border-top: 1px solid #ababab;
}

.second {
  flex: 1;
  margin-top: 31px;
  padding: 150px 250px 0;
  border-top: 1px solid #c6c6c6;
}

.second::before {
  content: "";
  display: block;
  height: 50px;
  border: 1px solid #ababab;
  border-width: 0 1px;
}

/* status bar */
.status {
  display: flex;
  align-items: center;
  flex: none;
  gap: 20px;
  height: 22px;
  padding: 0 9px 2px 8px;
  background: #f3f3f3;
  border-top: 1px solid #c6c6c6;
  color: #333;
}

.views {
  display: flex;
  margin: 0 0 -2px auto;
  align-self: stretch;
}

.views button {
  display: flex;
  align-items: center;
  justify-content: center;
  width: 38px;
}

.views .on {
  background: #c9c9c9;
}

.zoom {
  display: flex;
  align-items: center;
  gap: 3px;
  margin-left: -16px;
}

.zoom button {
  display: flex;
}

.zoom span {
  margin-left: 8px;
}

.zoom input {
  width: 100px;
  height: 12px;
  appearance: none;
  background:
    linear-gradient(#999, #999) center / 1px 5px no-repeat,
    linear-gradient(#999, #999) center / 100% 1px no-repeat;
}

.zoom input::-webkit-slider-thumb {
  appearance: none;
  width: 5px;
  height: 11px;
  background: #666;
}

/* taskbar */
.taskbar {
  display: flex;
  flex: none;
  gap: 5px;
  height: 40px;
  padding-left: 2px;
  background: linear-gradient(#2a2928, #1e1d1c 12px);
}

.taskbar button {
  display: flex;
  align-items: center;
  justify-content: center;
  width: 44px;
}

.taskbar .open {
  border-bottom: 2px solid #585858;
}

.taskbar .current {
  background: #a3a3a3;
}

.clock {
  width: 74px;
  margin-left: auto;
  line-height: 19px;
  text-align: center;
  color: #000;
}

/* dialogs */
.dialog {
  position: absolute;
  background: #f0f0f0;
  color: #000;
}

.style-dialog {
  left: 8px;
  top: 138px;
  width: 552px;
  border: 1px solid #9a9a9a;
  box-shadow: 0 3px 10px rgba(0, 0, 0, 0.4);
}

.font-dialog {
  left: 953px;
  top: 79px;
  width: 458px;
  box-shadow: 0 4px 16px rgba(0, 0, 0, 0.5);
}

.dlg-title {
  display: flex;
  align-items: center;
  height: 30px;
  padding: 0 2px 2px 8px;
  background: #fff;
}

.style-dialog .dlg-title {
  color: #8a8a8a;
}

.dlg-title span {
  flex: 1;
}

.dlg-title button {
  display: flex;
  align-items: center;
  justify-content: center;
  width: 45px;
  font-size: 14px;
}

.dialog h3 {
  display: flex;
  align-items: center;
  gap: 6px;
  line-height: 18px;
}

.dialog h3::after {
  content: "";
  flex: 1;
  height: 1px;
  background: #dcdcdc;
}

.combo {
  display: flex;
  height: 26px;
  border: 1px solid #ababab;
  background: #fff;
}

.combo.short {
  height: 24px;
}

.combo.tall {
  height: 28px;
}

.combo select,
.combo input,
.text {
  flex: 1;
  min-width: 0;
  border: none;
  border-radius: 0;
  outline: none;
  background: none;
  appearance: none;
  padding: 0 2px 2px;
  color: #000;
}

.combo.marked select {
  padding-left: 10px;
}

.combo.centered select {
  text-align: center;
  text-align-last: center;
}

.text {
  width: 100%;
  height: 26px;
  border: 1px solid #ababab;
  background: #fff;
}

.arrow {
  display: flex;
  align-items: center;
  justify-content: center;
  width: 17px;
  background: #e1e1e1;
  border: 1px solid #ababab;
  color: #444;
}

.off,
.combo.off select,
.off-text select {
  color: #7a7a7a;
  opacity: 1;
}

.combo.off {
  background: #f0f0f0;
}

::selection {
  background: #9ccbee;
  color: #000;
}

.tog {
  display: flex;
  align-items: center;
  justify-content: center;
  width: 23px;
  height: 22px;
  color: #555;
}

.tog.on {
  background: #c2ddf2;
  border: 1px solid #93c4ea;
}

.bar {
  width: 1px;
  height: 28px;
  background: #a0a0a0;
}

.btn {
  width: 74px;
  height: 29px;
  border: 1px solid #adadad;
  background: #e1e1e1;
  color: #000;
}

.btn.default {
  border: 2px solid #1f7ac0;
}

.btn:disabled {
  color: #838383;
}

.dlg-buttons {
  display: flex;
  gap: 10px;
}

.dlg-buttons .left {
  margin-right: auto;
}

input[type="checkbox"],
input[type="radio"] {
  appearance: none;
  flex: none;
  display: grid;
  place-items: center;
  width: 13px;
  height: 13px;
  border: 1px solid #333;
  background: #fff;
}

input[type="radio"] {
  border-radius: 50%;
}

input[type="radio"]:checked::before {
  content: "";
  width: 7px;
  height: 7px;
  border-radius: 50%;
  background: #222;
}

input[type="checkbox"]:checked::before {
  content: "";
  width: 9px;
  height: 5px;
  border: solid #222;
  border-width: 0 0 1px 1px;
  transform: translateY(-1px) rotate(-45deg);
}

.scroll {
  display: flex;
  flex-direction: column;
  align-items: center;
  flex: none;
  width: 16px;
  padding: 6px 0;
  background: #f0f0f0;
  color: #444;
}

.scroll i {
  flex: 1;
  width: 15px;
  margin: 5px 0;
  background: #cdcdcd;
}

/* modify style dialog */
.style-body {
  padding: 9px 7px 10px 6px;
}

.fields {
  display: grid;
  grid-template-columns: 90px 1fr;
  align-items: center;
  row-gap: 5px;
  column-gap: 9px;
  padding: 8px 0 11px 9px;
  white-space: nowrap;
}

.format-row {
  display: flex;
  align-items: center;
  gap: 3px;
  height: 48px;
  margin-left: 9px;
  padding-bottom: 4px;
  border-bottom: 1px solid #d4d4d4;
}

.format-row .bar {
  margin-right: 1px;
}

.w-face { width: 105px; }
.w-size { width: 45px; }
.w-lang { width: 88px; }

.align-row {
  display: flex;
  align-items: center;
  gap: 9px;
  height: 37px;
  margin-left: 9px;
}

.sample {
  height: 200px;
  margin-left: 9px;
  padding: 10px 33px 0;
  border: 1px solid #666;
  background: #fff;
  font: 300 10px/14px "Noto Sans CJK SC", sans-serif;
  color: #aaa;
  white-space: nowrap;
}

.sample .main {
  margin: 6px 0;
  font-weight: 700;
  font-size: 15px;
  line-height: 18px;
  color: #000;
}

.summary {
  display: flex;
  height: 75px;
  margin: 4px 0 12px 9px;
  padding: 2px;
  border: 1px solid #ababab;
  line-height: 17px;
}

.summary p {
  flex: 1;
}

.summary span {
  margin-left: 16px;
}

.summary .scroll i {
  flex: none;
  height: 23px;
  margin-bottom: auto;
}

.checks {
  display: flex;
  gap: 12px;
  height: 25px;
}

.checks label {
  display: flex;
  gap: 4px;
  height: 16px;
  align-items: center;
}

.style-body .dlg-buttons {
  padding: 8px 0 0 1px;
}

/* font dialog */
.font-body {
  padding: 9px 8px 11px 7px;
}

.dlg-tabs {
  display: flex;
  align-items: flex-end;
  position: relative;
}

.dlg-tabs button {
  width: 55px;
  height: 26px;
  border: 1px solid #dcdcdc;
  border-width: 1px 1px 0 0;
  background: #f0f0f0;
}

.dlg-tabs .active {
  width: 61px;
  height: 28px;
  margin-bottom: -1px;
  border-width: 1px 1px 0 1px;
  background: #fff;
}

.panel {
  height: 531px;
  padding: 39px 7px 0 8px;
  border: 1px solid #dcdcdc;
  background: #fff;
}

.font-top,
.font-all {
  display: grid;
  column-gap: 9px;
  padding-left: 9px;
}

.font-top {
  grid-template-columns: 232px 105px 1fr;
}

.font-all {
  grid-template-columns: 112px 111px 105px 1fr;
  height: 51px;
  padding-top: 3px;
}

.panel label {
  display: block;
  height: 20px;
}

.faces .combo + label {
  margin-top: 9px;
}

#west {
  font: 13px/17px "Noto Sans", sans-serif;
}

.list {
  display: flex;
  height: 56px;
  padding: 1px;
  border: 1px solid #828790;
}

.list select {
  flex: 1;
  min-width: 0;
  border: none;
  outline: none;
  overflow: hidden;
  padding: 0;
  background: none;
}

.list option {
  height: 17px;
  min-height: 0;
  padding: 0 2px;
  line-height: 17px;
}

.list option:checked {
  background: linear-gradient(#0a78d0, #0a78d0);
  color: #fff;
  -webkit-text-fill-color: #fff;
}

.font-top + h3 {
  margin: 9px 0 8px;
}

.font-all + h3 {
  margin: 12px 0 0;
}

.effects {
  display: grid;
  grid-template-columns: 284px 1fr;
  row-gap: 9px;
  padding: 11px 0 0 9px;
}

.panel .effects label {
  display: flex;
  align-items: center;
  gap: 4px;
  height: 16px;
}

.effects + h3 {
  margin-top: 19px;
}

.font-preview {
  display: flex;
  align-items: center;
  justify-content: space-between;
  height: 53px;
  margin: 9px 0 0 9px;
  padding: 0 1px;
  border: 1px solid #666;
  font: bold 20px/30px "Liberation Serif", "Noto Sans CJK SC", serif;
}

.font-preview i {
  width: 62px;
  height: 14px;
  border-bottom: 1px solid #000;
}

.font-body .dlg-buttons {
  padding: 12px 0 0;
}

.font-dialog .left {
  width: 94px;
}

.pointer {
  position: absolute;
  left: 398px;
  top: 194px;
}
```
